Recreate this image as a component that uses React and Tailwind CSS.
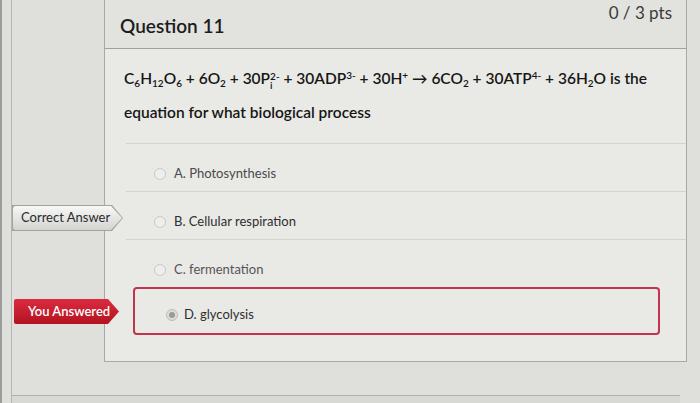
import React from "react";

const answers = [
  { id: "A", text: "A. Photosynthesis", color: "text-[#4a4a4a]" },
  { id: "B", text: "B. Cellular respiration", color: "text-[#2f2f2f]", label: "correct" },
  { id: "C", text: "C. fermentation", color: "text-[#555555]" },
];

const arrowClip =
  "[clip-path:polygon(0_0,calc(100%-11px)_0,100%_50%,calc(100%-11px)_100%,0_100%)]";

const CorrectLabel = () => (
  <div className={`absolute left-[-114px] top-[13px] h-[26px] w-[111px] bg-[#a3a3a1] p-px ${arrowClip}`}>
    <div
      className={`flex h-full items-center rounded-l-[3px] bg-gradient-to-b from-[#f7f7f5] to-[#d4d4d2] pl-[8px] text-[13px] text-[#2a2a2a] ${arrowClip}`}
    >
      Correct Answer
    </div>
  </div>
);

const YouAnsweredLabel = () => (
  <div
    className={`absolute left-[-121px] top-[10px] flex h-[25px] w-[105px] items-center rounded-l-[2px] bg-gradient-to-b from-[#dc2a40] to-[#b3121f] pl-[14px] text-[13px] font-semibold text-white ${arrowClip}`}
  >
    You Answered
  </div>
);

const Radio = ({ checked }) =>
  checked ? (
    <span className="flex h-[12px] w-[12px] shrink-0 items-center justify-center rounded-full border border-[#bdbdbb] bg-[#dcdcda]">
      <span className="h-[6px] w-[6px] rounded-full bg-[#9a9a98]" />
    </span>
  ) : (
    <span className="h-[12px] w-[12px] shrink-0 rounded-full border border-[#c9c9c7] bg-[#eeeeec]" />
  );

export default function App() {
  return (
    <div
      className="flex h-[403px] w-[700px] overflow-hidden border-l-2 border-[#9c9c9a] bg-[#dfdfdc] pl-[9px]"
      style={{ fontFamily: "Lato, 'Open Sans', sans-serif" }}
    >
      <div className="flex flex-1 flex-col border-l border-[#b6b6b3]">
        <div className="pl-[92px] pr-[13px]">
          <div className="flex h-[362px] flex-col border-x border-b border-[#a8a8a6] bg-[#e9e9e6]">
            <div className="flex h-[49px] shrink-0 justify-between border-b border-[#9f9f9d] bg-[#e2e2df] pl-[15px] pr-[14px]">
              <h2 className="pt-[12px] text-[19px] font-semibold text-[#1c1c1c]">Question 11</h2>
              <span className="text-[17px] text-[#3a3a3a]">0 / 3 pts</span>
            </div>

            <div className="pl-[19px] pr-[20px] pt-[12px]">
              <p className="text-[15.5px] font-semibold leading-[34px] text-[#161616]">
                C<sub className="text-[10px]">6</sub>H<sub className="text-[10px]">12</sub>O
                <sub className="text-[10px]">6</sub> + 6O<sub className="text-[10px]">2</sub> + 30P
                <span className="inline-flex translate-y-[1px] flex-col align-middle text-[10px] leading-[9px]">
                  <span>2-</span>
                  <span>i</span>
                </span>{" "}
                + 30ADP<sup className="text-[10px]">3-</sup> + 30H<sup className="text-[10px]">+</sup> → 6CO
                <sub className="text-[10px]">2</sub> + 30ATP<sup className="text-[10px]">4-</sup> + 36H
                <sub className="text-[10px]">2</sub>O is the equation for what biological process
              </p>
            </div>

            <div className="ml-[21px] mt-[14px]">
              {answers.map((a) => (
                <div
                  key={a.id}
                  className="relative flex h-[48px] items-center border-t border-[#d3d3d0] pl-[28px] pt-[12px]"
                >
                  {a.label === "correct" && <CorrectLabel />}
                  <Radio />
                  <span className={`ml-[8px] text-[13px] ${a.color}`}>{a.text}</span>
                </div>
              ))}
              <div className="relative mr-[26px] ml-[7px] flex h-[48px] items-center rounded-[4px] border-2 border-[#c2334d] pl-[31px] pt-[8px]">
                <YouAnsweredLabel />
                <Radio checked />
                <span className="ml-[6px] text-[13px] text-[#2f2f2f]">D. glycolysis</span>
              </div>
            </div>
          </div>
        </div>
        <div className="mt-[33px] mr-[20px] border-t border-[#b0b0ad] flex-1 bg-[#d8d8d5]" />
      </div>
    </div>
  );
}
